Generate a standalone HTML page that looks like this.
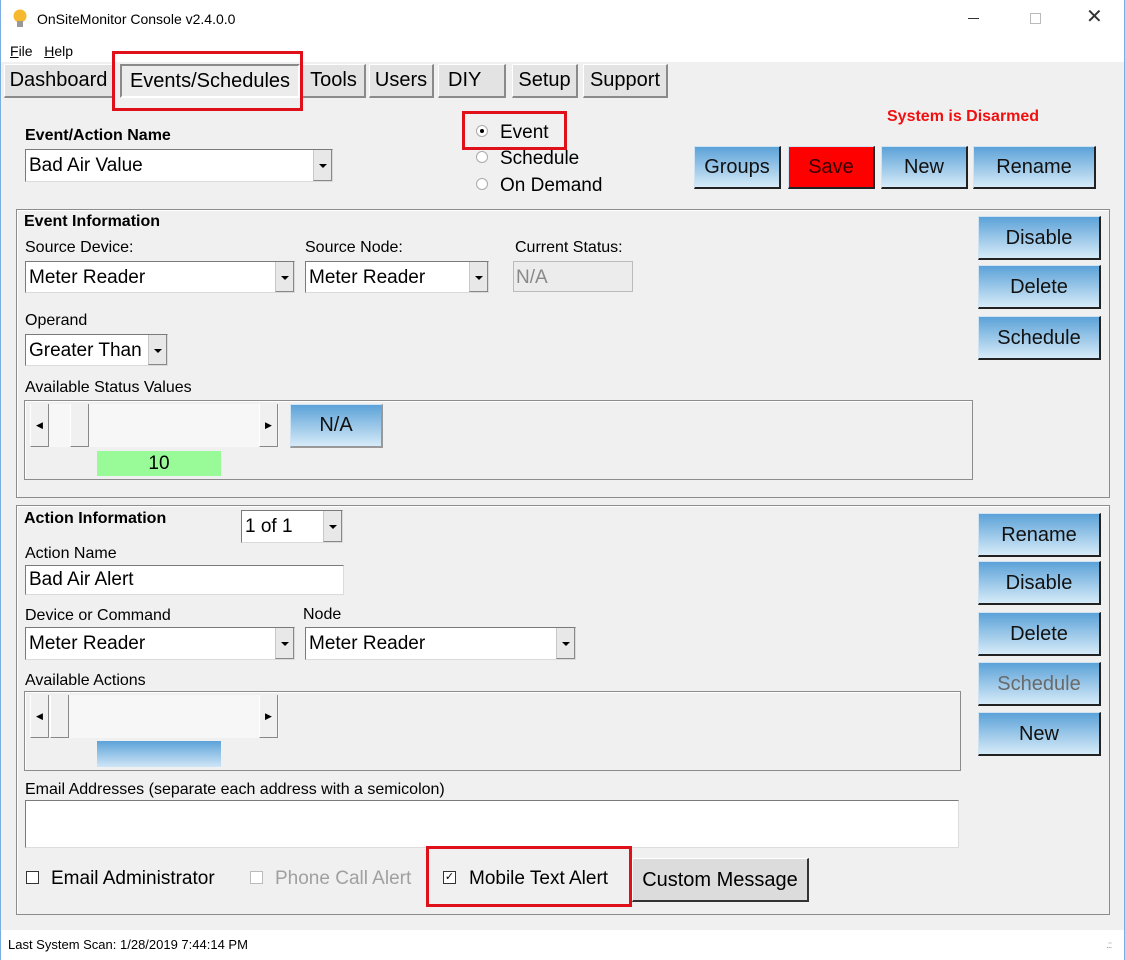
<!DOCTYPE html>
<html><head><meta charset="utf-8"><style>
*{box-sizing:border-box;margin:0;padding:0}
body{width:1125px;height:960px;background:#f0f0f0;font-family:"Liberation Sans",Arial,sans-serif;position:relative;overflow:hidden;color:#000}
.a{position:absolute;white-space:nowrap}
.t{position:absolute;white-space:nowrap;font-size:16px;line-height:18px}
.b{position:absolute;font-weight:bold;font-size:16px;white-space:nowrap}
.combo{position:absolute;background:#fff;border:1px solid #7a7a7a;border-right-color:#dadada;border-bottom-color:#dadada;font-size:19px;padding:5px 0 0 3px;white-space:nowrap;overflow:hidden}
.combo .dd{position:absolute;right:0;top:0;bottom:0;width:19px;background:#e8e8e8;border-left:1px solid #c8c8c8;border-bottom:1px solid #888;border-right:1px solid #888}
.combo .dd:after{content:"";position:absolute;left:5px;top:50%;margin-top:-1px;border:4px solid transparent;border-top:4px solid #000;border-bottom:0}
.btn{position:absolute;background:linear-gradient(#5ca2d8,#d6ebf8);border-right:2px solid #222;border-bottom:2px solid #222;border-top:1px solid #cfe3f2;border-left:1px solid #cfe3f2;font-size:20px;text-align:center;color:#111}
.tab{position:absolute;top:64px;height:34px;background:#e3e3e3;border:1px solid #fff;border-right:2px solid #8a8a8a;border-bottom:2px solid #8a8a8a;font-size:20px;line-height:30px;text-align:center}
.grp{position:absolute;border:1px solid #8c8c8c;box-shadow:inset 1px 1px 0 #fff}
.red{position:absolute;border:3px solid #e0101a}
.sb{position:absolute;background:#f7f7f7}
.arr{position:absolute;width:19px;background:#f0f0f0;border-right:1px solid #888;border-bottom:1px solid #888;border-left:1px solid #fff}
.chk{position:absolute;width:13px;height:13px;border:1px solid #333;background:#fff}
.rad{position:absolute;width:12px;height:12px;border-radius:50%;border:1px solid #aaa;background:#fff}
</style></head><body>
<div class="a" style="left:0;top:0;width:1125px;height:62px;background:#fff"></div>
<div class="a" style="left:0;top:0;width:1px;height:960px;background:#7aaee0"></div>
<div class="a" style="left:1124px;top:0;width:1px;height:960px;background:#7aaee0"></div>
<svg class="a" style="left:12px;top:8px" width="16" height="22"><circle cx="8" cy="8" r="6.5" fill="#f5b82e"/><rect x="5" y="13" width="6" height="6" fill="#999"/></svg>
<div class="a" style="left:37px;top:11px;font-size:14px">OnSiteMonitor Console v2.4.0.0</div>
<div class="a" style="left:968px;top:18px;width:11px;height:1px;background:#333"></div>
<div class="a" style="left:1030px;top:13px;width:11px;height:11px;border:1px solid #bbb"></div>
<div class="a" style="left:1086px;top:4px;font-size:20px;color:#333">✕</div>
<div class="a" style="left:10px;top:43px;font-size:14px"><u>F</u>ile &nbsp;&nbsp;<u>H</u>elp</div>

<div class="tab" style="left:4px;width:110px">Dashboard</div>
<div class="tab" style="left:120px;width:180px;background:#ececec;border:2px solid #8a8a8a;border-right-color:#fff;border-bottom-color:#fff">Events/Schedules</div>
<div class="tab" style="left:302px;width:64px">Tools</div>
<div class="tab" style="left:369px;width:65px">Users</div>
<div class="tab" style="left:438px;width:68px;text-align:left;padding-left:9px">DIY</div>
<div class="tab" style="left:512px;width:66px">Setup</div>
<div class="tab" style="left:583px;width:85px">Support</div>
<div class="red" style="left:112px;top:51px;width:191px;height:60px"></div>

<div class="b" style="left:25px;top:127px">Event/Action Name</div>
<div class="combo" style="left:25px;top:149px;width:308px;height:33px">Bad Air Value<div class="dd"></div></div>

<div class="rad" style="left:476px;top:125px"></div><div class="a" style="left:480px;top:129px;width:4px;height:4px;background:#000;border-radius:50%"></div>
<div class="a" style="left:500px;top:122px;font-size:19px">Event</div>
<div class="rad" style="left:476px;top:151px"></div><div class="a" style="left:500px;top:148px;font-size:19px">Schedule</div>
<div class="rad" style="left:476px;top:178px"></div><div class="a" style="left:500px;top:175px;font-size:19px">On Demand</div>
<div class="red" style="left:462px;top:111px;width:105px;height:39px"></div>

<div class="b" style="left:887px;top:108px;color:#f01010">System is Disarmed</div>
<div class="btn" style="left:694px;top:146px;width:87px;height:43px;line-height:40px">Groups</div>
<div class="btn" style="left:788px;top:146px;width:87px;height:43px;line-height:40px;background:#ff0000;color:#300">Save</div>
<div class="btn" style="left:881px;top:146px;width:87px;height:43px;line-height:40px">New</div>
<div class="btn" style="left:973px;top:146px;width:123px;height:43px;line-height:40px">Rename</div>

<div class="grp" style="left:16px;top:209px;width:1094px;height:289px"></div>
<div class="b" style="left:24px;top:213px">Event Information</div>
<div class="t" style="left:25px;top:239px">Source Device:</div>
<div class="combo" style="left:25px;top:261px;width:270px;height:32px">Meter Reader<div class="dd"></div></div>
<div class="t" style="left:305px;top:239px">Source Node:</div>
<div class="combo" style="left:305px;top:261px;width:184px;height:32px">Meter Reader<div class="dd"></div></div>
<div class="t" style="left:515px;top:239px">Current Status:</div>
<div class="a" style="left:513px;top:261px;width:120px;height:31px;border:1px solid #bbb;background:#ececec;color:#888;font-size:19px;padding:5px 0 0 2px">N/A</div>
<div class="t" style="left:25px;top:312px">Operand</div>
<div class="combo" style="left:25px;top:334px;width:143px;height:32px">Greater Than<div class="dd"></div></div>
<div class="t" style="left:25px;top:379px">Available Status Values</div>
<div class="grp" style="left:24px;top:400px;width:949px;height:80px"></div>
<div class="sb" style="left:30px;top:404px;width:249px;height:43px"></div>
<div class="arr" style="left:30px;top:404px;height:43px;font-size:9px;line-height:43px;text-align:center">◀</div>
<div class="arr" style="left:70px;top:404px;height:43px"></div>
<div class="arr" style="left:259px;top:404px;height:43px;font-size:9px;line-height:43px;text-align:center">▶</div>
<div class="btn" style="left:290px;top:404px;width:93px;height:44px;line-height:40px;border-right-color:#999;border-bottom-color:#999">N/A</div>
<div class="a" style="left:97px;top:451px;width:124px;height:25px;background:#98fb98;font-size:19px;text-align:center;line-height:25px">10</div>
<div class="btn" style="left:978px;top:216px;width:123px;height:44px;line-height:42px">Disable</div>
<div class="btn" style="left:978px;top:265px;width:123px;height:44px;line-height:42px">Delete</div>
<div class="btn" style="left:978px;top:316px;width:123px;height:44px;line-height:42px">Schedule</div>

<div class="grp" style="left:16px;top:505px;width:1094px;height:410px"></div>
<div class="b" style="left:24px;top:510px">Action Information</div>
<div class="combo" style="left:241px;top:510px;width:102px;height:33px">1 of 1<div class="dd"></div></div>
<div class="t" style="left:25px;top:545px">Action Name</div>
<div class="combo" style="left:25px;top:565px;width:319px;height:30px;padding-top:3px">Bad Air Alert</div>
<div class="t" style="left:25px;top:607px">Device or Command</div>
<div class="combo" style="left:25px;top:627px;width:270px;height:33px">Meter Reader<div class="dd"></div></div>
<div class="t" style="left:303px;top:606px">Node</div>
<div class="combo" style="left:305px;top:627px;width:271px;height:33px">Meter Reader<div class="dd"></div></div>
<div class="t" style="left:25px;top:672px">Available Actions</div>
<div class="grp" style="left:24px;top:691px;width:937px;height:80px"></div>
<div class="sb" style="left:30px;top:695px;width:249px;height:43px"></div>
<div class="arr" style="left:30px;top:695px;height:43px;font-size:9px;line-height:43px;text-align:center">◀</div>
<div class="arr" style="left:50px;top:695px;height:43px"></div>
<div class="arr" style="left:259px;top:695px;height:43px;font-size:9px;line-height:43px;text-align:center">▶</div>
<div class="a" style="left:97px;top:741px;width:124px;height:26px;background:linear-gradient(#5ca2d8,#cfe6f7)"></div>
<div class="btn" style="left:978px;top:513px;width:123px;height:44px;line-height:42px">Rename</div>
<div class="btn" style="left:978px;top:561px;width:123px;height:44px;line-height:42px">Disable</div>
<div class="btn" style="left:978px;top:612px;width:123px;height:44px;line-height:42px">Delete</div>
<div class="btn" style="left:978px;top:662px;width:123px;height:44px;line-height:42px;color:#6a6a6a">Schedule</div>
<div class="btn" style="left:978px;top:712px;width:123px;height:44px;line-height:42px">New</div>
<div class="t" style="left:25px;top:781px">Email Addresses (separate each address with a semicolon)</div>
<div class="a" style="left:25px;top:800px;width:934px;height:48px;background:#fff;border:1px solid #7a7a7a;border-right-color:#ddd;border-bottom-color:#ddd"></div>

<div class="chk" style="left:26px;top:871px"></div>
<div class="a" style="left:51px;top:868px;font-size:19px">Email Administrator</div>
<div class="chk" style="left:250px;top:871px;border-color:#bbb"></div>
<div class="a" style="left:275px;top:868px;font-size:19px;color:#a0a0a0">Phone Call Alert</div>
<div class="chk" style="left:443px;top:871px;font-size:11px;line-height:11px;text-align:center">✓</div>
<div class="a" style="left:469px;top:868px;font-size:19px">Mobile Text Alert</div>
<div class="red" style="left:426px;top:846px;width:206px;height:61px"></div>
<div class="a" style="left:632px;top:858px;width:177px;height:44px;background:#dcdcdc;border-right:2px solid #333;border-bottom:2px solid #333;border-top:1px solid #fff;border-left:1px solid #fff;font-size:20px;text-align:center;line-height:42px">Custom Message</div>

<div class="a" style="left:1px;top:930px;width:1123px;height:30px;background:#fff"></div>
<div class="a" style="left:8px;top:937px;font-size:13px">Last System Scan: 1/28/2019 7:44:14 PM</div>
<div class="a" style="left:1106px;top:940px;font-size:10px;color:#999;letter-spacing:-1px">.::</div>
</body></html>
